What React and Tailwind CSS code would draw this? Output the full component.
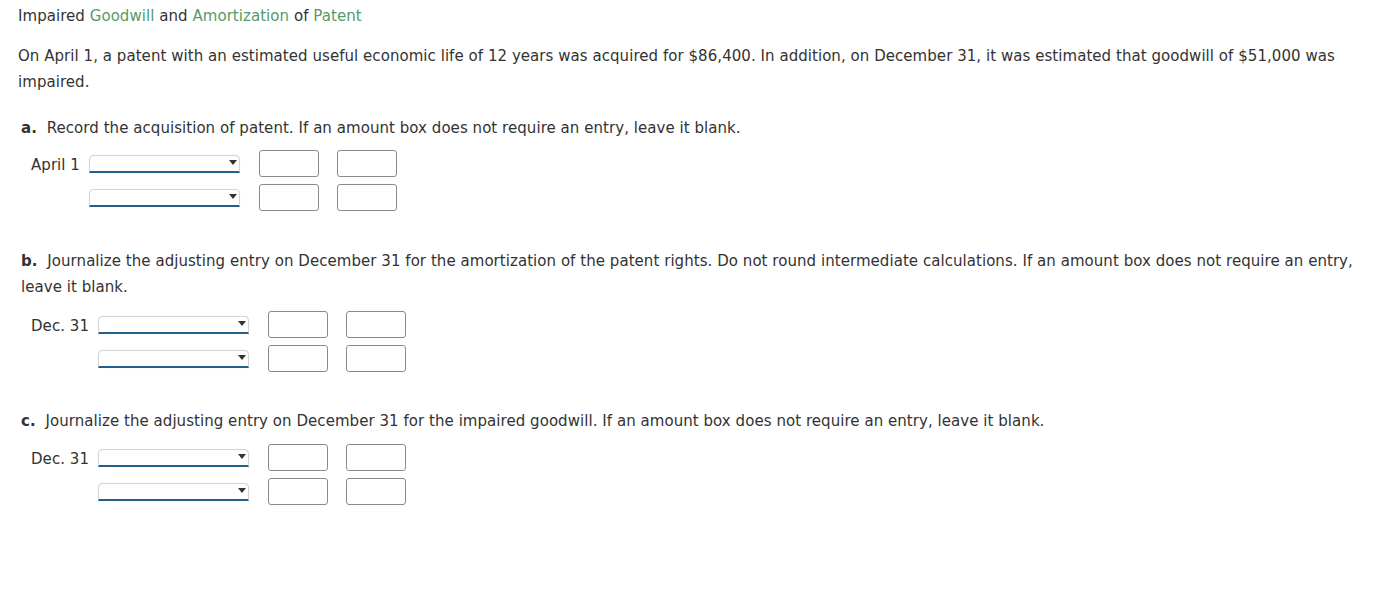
const Dropdown = () => (
  <div className="relative w-[151px] h-[18px] bg-white border border-[#d4d4d4] border-b-2 border-b-[#245f8c] rounded-tl-[5px] rounded-tr-[5px] shadow-[0_0_1px_rgba(0,0,0,0.15)]">
    <svg
      className="absolute right-[2px] top-[4px]"
      width="8"
      height="5"
      viewBox="0 0 8 5"
    >
      <polygon points="0,0 8,0 4,5" fill="#333" />
    </svg>
  </div>
);

const AmountBox = () => (
  <div className="w-[60px] h-[27px] bg-white border border-[#8a8a8a] rounded-[3px]" />
);

const EntryRows = ({ label, labelGap }) => (
  <div className="ml-[13px] flex flex-col gap-[7px]">
    {[label, ""].map((text, i) => (
      <div key={i} className="flex items-center h-[27px]">
        <span className={`whitespace-nowrap pt-[3px] ${labelGap}`}>{text}</span>
        <Dropdown />
        <div className="ml-[19px] flex gap-[18px]">
          <AmountBox />
          <AmountBox />
        </div>
      </div>
    ))}
  </div>
);

export default function App() {
  return (
    <div
      className="min-h-[612px] bg-white text-[#333] text-[15px] tracking-[0.05px] leading-[26px] pl-[18px] pr-[2px] pt-[3px]"
      style={{ fontFamily: '"DejaVu Sans", Verdana, sans-serif' }}
    >
      <p>
        Impaired <span className="text-[#579a69]">Goodwill</span> and{" "}
        <span className="text-[#579a69]">Amortization</span> of{" "}
        <span className="text-[#579a69]">Patent</span>
      </p>

      <p className="mt-[14px]">
        On April 1, a patent with an estimated useful economic life of 12 years was acquired for
        $86,400. In addition, on December 31, it was estimated that goodwill of $51,000 was
        <br />
        impaired.
      </p>

      <p className="mt-[20px] ml-[3px]">
        <b className="mr-[5px]">a.</b> Record the acquisition of patent. If an amount box does not
        require an entry, leave it blank.
      </p>
      <div className="mt-[9px]">
        <EntryRows label="April 1" labelGap="w-[58px]" />
      </div>

      <p className="mt-[37px] ml-[3px]">
        <b className="mr-[5px]">b.</b> Journalize the adjusting entry on December 31 for the
        amortization of the patent rights. Do not round intermediate calculations. If an amount box
        does not require an entry,
        <br />
        leave it blank.
      </p>
      <div className="mt-[11px]">
        <EntryRows label="Dec. 31" labelGap="w-[67px]" />
      </div>

      <p className="mt-[36px] ml-[3px]">
        <b className="mr-[5px]">c.</b> Journalize the adjusting entry on December 31 for the
        impaired goodwill. If an amount box does not require an entry, leave it blank.
      </p>
      <div className="mt-[10px]">
        <EntryRows label="Dec. 31" labelGap="w-[67px]" />
      </div>
    </div>
  );
}
